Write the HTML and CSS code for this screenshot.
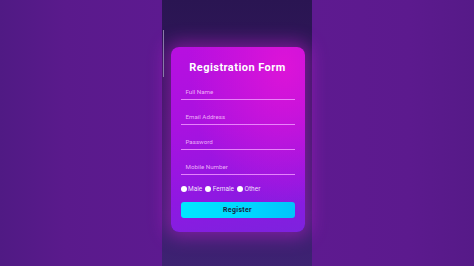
FILE: index.html
```html
<!DOCTYPE html>
<html>
<head>
<meta charset="utf-8">
<link rel="stylesheet" href="styles.css">
</head>
<body>
<div class="page">
  <div class="side side-left"></div>
  <div class="phone">
    <div class="scroll"></div>
    <form class="card">
      <h1 class="title">Registration Form</h1>
      <div class="field">Full Name</div>
      <div class="field">Email Address</div>
      <div class="field">Password</div>
      <div class="field">Mobile Number</div>
      <div class="radios">
        <span class="opt"><span class="dot"></span>Male</span>
        <span class="opt"><span class="dot"></span>Female</span>
        <span class="opt"><span class="dot"></span>Other</span>
      </div>
      <div class="btn">Register</div>
    </form>
  </div>
  <div class="side side-right"></div>
</div>
</body>
</html>
```
FILE: styles.css
```css
* { box-sizing: border-box; margin: 0; padding: 0; }
html, body { width: 474px; height: 266px; overflow: hidden; }
body { font-family: Roboto, "Liberation Sans", sans-serif; background: #5b1a8d; }
.page { display: flex; width: 474px; height: 266px; }
.side { flex: 1; }
.side-left { background: linear-gradient(90deg, #501a84 0%, #5a1a8c 40%, #5d1a90 100%); }
.side-right { background: linear-gradient(90deg, #5e1a90 0%, #5c1a8e 60%, #561a88 100%); }
.phone {
  width: 150px;
  position: relative;
  background: linear-gradient(180deg, #2a1552 0%, #32185e 40%, #3b1f6e 80%, #3d2272 100%);
  display: flex;
  justify-content: center;
  align-items: flex-start;
  padding-top: 47px;
  padding-left: 1px;
}
.scroll {
  position: absolute;
  left: 1px; top: 30px;
  width: 1px; height: 47px;
  background: #8a7aa8;
}
.card {
  width: 134px;
  border-radius: 8px;
  background:
    radial-gradient(ellipse at 85% 10%, rgba(225, 20, 215, 0.9) 0%, rgba(225,20,215,0) 60%),
    linear-gradient(170deg, #b80fe0 0%, #a812e0 40%, #8f18e2 75%, #7d22de 100%);
  box-shadow: 0 0 18px 5px rgba(210, 30, 220, 0.45);
  padding: 14px 10px 14px 10px;
  display: flex;
  flex-direction: column;
  color: #fff;
}
.title {
  font-size: 11px;
  font-weight: 700;
  letter-spacing: 0.45px;
  text-align: center;
  line-height: 14px;
  margin-bottom: 13px;
}
.field {
  font-size: 6.2px;
  line-height: 8px;
  color: rgba(255, 215, 255, 0.8);
  padding: 0 0 3px 5px;
  border-bottom: 1px solid rgba(240, 150, 255, 0.85);
}
.field + .field { margin-top: 13px; }
.radios {
  display: flex;
  gap: 3px;
  font-size: 6.5px;
  margin-top: 10px;
  line-height: 8px;
  color: rgba(255,255,255,0.88);
}
.opt { display: flex; align-items: center; gap: 1.5px; }
.dot { width: 6px; height: 6px; border-radius: 50%; background: #fff; display: inline-block; }
.btn {
  margin-top: 9px;
  height: 16px;
  border-radius: 3px;
  background: linear-gradient(90deg, #00e8ff 0%, #00d6ff 60%, #00c4fa 100%);
  color: #1a2540;
  font-size: 7px;
  font-weight: 700;
  letter-spacing: 0.3px;
  display: flex;
  align-items: center;
  justify-content: center;
}
```
